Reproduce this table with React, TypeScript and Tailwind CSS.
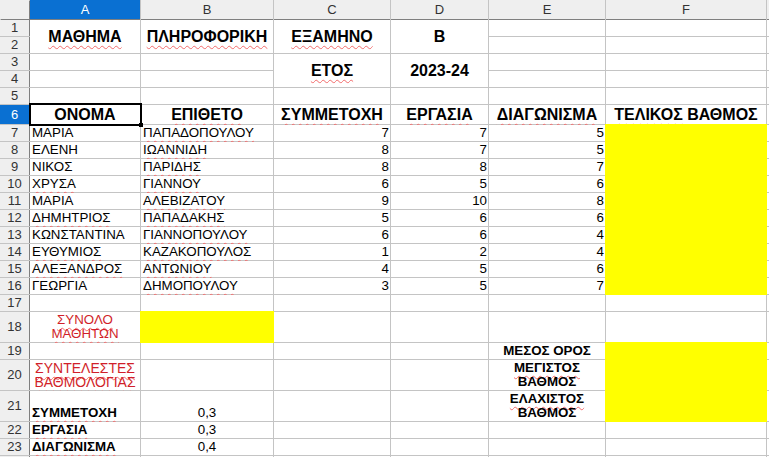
import React from "react";

const sq = "underline decoration-wavy decoration-[#f26b6b] decoration-1 underline-offset-[3px]";

const students: [string, boolean, string, number, number, number][] = [
  ["ΜΑΡΙΑ", false, "ΠΑΠΑΔΟΠΟΥΛΟΥ", 7, 7, 5],
  ["ΕΛΕΝΗ", false, "ΙΩΑΝΝΙΔΗ", 8, 7, 5],
  ["ΝΙΚΟΣ", false, "ΠΑΡΙΔΗΣ", 8, 8, 7],
  ["ΧΡΥΣΑ", true, "ΓΙΑΝΝΟΥ", 6, 5, 6],
  ["ΜΑΡΙΑ", false, "ΑΛΕΒΙΖΑΤΟΥ", 9, 10, 8],
  ["ΔΗΜΗΤΡΙΟΣ", true, "ΠΑΠΑΔΑΚΗΣ", 5, 6, 6],
  ["ΚΩΝΣΤΑΝΤΙΝΑ", false, "ΓΙΑΝΝΟΠΟΥΛΟΥ", 6, 6, 4],
  ["ΕΥΘΥΜΙΟΣ", true, "ΚΑΖΑΚΟΠΟΥΛΟΣ", 1, 2, 4],
  ["ΑΛΕΞΑΝΔΡΟΣ", true, "ΑΝΤΩΝΙΟΥ", 4, 5, 6],
  ["ΓΕΩΡΓΙΑ", false, "ΔΗΜΟΠΟΥΛΟΥ", 3, 5, 7],
];

function RowHead({ n, active }: { n?: number; active?: boolean }) {
  return (
    <div
      className={
        active
          ? "flex items-center justify-center bg-[#0a70d2] text-white text-[13px] shadow-[1px_0_0_#7f7f7f]"
          : "flex items-center justify-center bg-[#efefef] text-[#333] text-[13px] shadow-[1px_0_0_#7f7f7f]"
      }
    >
      {n}
    </div>
  );
}

function ColHead({ label, active }: { label: string; active?: boolean }) {
  return (
    <div
      className={
        active
          ? "flex items-center justify-center bg-[#0a70d2] text-white text-[13px] shadow-[0_1px_0_#7f7f7f]"
          : "flex items-center justify-center bg-[#efefef] text-[#333] text-[13px] shadow-[0_1px_0_#7f7f7f]"
      }
    >
      {label}
    </div>
  );
}

function Empty() {
  return <div className="bg-white" />;
}

function Blanks({ n }: { n: number }) {
  return (
    <>
      {Array.from({ length: n }).map((_, i) => (
        <Empty key={i} />
      ))}
    </>
  );
}

export default function App() {
  return (
    <div className="w-[769px] h-[457px] overflow-hidden bg-white font-['Liberation_Sans',Arial,sans-serif] text-black">
      <div className="grid grid-cols-[29px_110px_132px_116px_97px_116px_160px_1fr] grid-rows-[19px_repeat(5,16px)_19px_repeat(11,16px)_30px_16px_30px_30px_16px_16px_16px] gap-px bg-[#c4c4c4]">
        {/* column headers */}
        <div className="bg-[#efefef] shadow-[1px_1px_0_#7f7f7f]" />
        <ColHead label="A" active />
        <ColHead label="B" />
        <ColHead label="C" />
        <ColHead label="D" />
        <ColHead label="E" />
        <ColHead label="F" />
        <div className="bg-[#efefef] shadow-[0_1px_0_#7f7f7f]" />

        {/* rows 1-2 */}
        <RowHead n={1} />
        <div className="row-span-2 flex items-center justify-center bg-white text-[16px] font-bold">
          <span className={sq}>ΜΑΘΗΜΑ</span>
        </div>
        <div className="row-span-2 flex items-center justify-center bg-white text-[16px] font-bold">
          <span className={sq}>ΠΛΗΡΟΦΟΡΙΚΗ</span>
        </div>
        <div className="row-span-2 flex items-center justify-center bg-white text-[16px] font-bold">
          <span className={sq}>ΕΞΑΜΗΝΟ</span>
        </div>
        <div className="row-span-2 flex items-center justify-center bg-white text-[16px] font-bold">Β</div>
        <Blanks n={3} />
        <RowHead n={2} />
        <Blanks n={3} />

        {/* rows 3-4 */}
        <RowHead n={3} />
        <Blanks n={2} />
        <div className="row-span-2 flex items-center justify-center bg-white text-[16px] font-bold">
          <span className={sq}>ΕΤΟΣ</span>
        </div>
        <div className="row-span-2 flex items-center justify-center bg-white text-[16px] font-bold">2023-24</div>
        <Blanks n={3} />
        <RowHead n={4} />
        <Blanks n={5} />

        {/* row 5 */}
        <RowHead n={5} />
        <Blanks n={7} />

        {/* row 6 */}
        <RowHead n={6} active />
        <div className="relative flex items-center justify-center bg-white text-[16px] font-bold">
          ΟΝΟΜΑ
          <div className="absolute -left-px -top-[2px] -right-[2px] -bottom-[2px] border-2 border-black" />
          <div className="absolute -right-[3px] -bottom-[3px] w-[4px] h-[4px] bg-black" />
        </div>
        <div className="flex items-center justify-center bg-white text-[16px] font-bold">
          <span className={sq}>ΕΠΙΘΕΤΟ</span>
        </div>
        <div className="flex items-center justify-center bg-white text-[16px] font-bold">
          <span className={sq}>ΣΥΜΜΕΤΟΧΗ</span>
        </div>
        <div className="flex items-center justify-center bg-white text-[16px] font-bold">
          <span className={sq}>ΕΡΓΑΣΙΑ</span>
        </div>
        <div className="flex items-center justify-center bg-white text-[16px] font-bold">
          <span className={sq}>ΔΙΑΓΩΝΙΣΜΑ</span>
        </div>
        <div className="flex items-center justify-center bg-white text-[16px] font-bold whitespace-nowrap">
          <span className={sq}>ΤΕΛΙΚΟΣ</span>&nbsp;ΒΑΘΜΟΣ
        </div>
        <Empty />

        {/* rows 7-16 */}
        {students.map(([name, nameSq, surname, a, b, c], i) => (
          <React.Fragment key={i}>
            <RowHead n={7 + i} />
            <div className="flex items-center bg-white px-[2px] text-[13.33px] leading-none">
              <span className={nameSq ? sq : ""}>{name}</span>
            </div>
            <div className="flex items-center bg-white px-[2px] text-[13.33px] leading-none">
              <span className={sq}>{surname}</span>
            </div>
            <div className="flex items-center justify-end bg-white px-[1px] text-[13.33px] leading-none">{a}</div>
            <div className="flex items-center justify-end bg-white px-[1px] text-[13.33px] leading-none">{b}</div>
            <div className="flex items-center justify-end bg-white px-[1px] text-[13.33px] leading-none">{c}</div>
            {i === 0 && <div className="row-span-10 -m-px bg-[#ffff00]" />}
            <Empty />
          </React.Fragment>
        ))}

        {/* row 17 */}
        <RowHead n={17} />
        <Blanks n={7} />

        {/* row 18 */}
        <RowHead n={18} />
        <div className="flex flex-col items-center justify-center bg-white text-[13.33px] leading-[14px] text-[#d11f2a]">
          <span className={sq}>ΣΥΝΟΛΟ</span>
          <span className={sq}>ΜΑΘΗΤΩΝ</span>
        </div>
        <div className="-m-px bg-[#ffff00]" />
        <Blanks n={5} />

        {/* row 19 */}
        <RowHead n={19} />
        <Blanks n={4} />
        <div className="flex items-center justify-center bg-white text-[13.33px] font-bold leading-none">ΜΕΣΟΣ ΟΡΟΣ</div>
        <div className="row-span-3 -m-px bg-[#ffff00]" />
        <Empty />

        {/* row 20 */}
        <RowHead n={20} />
        <div className="flex flex-col items-center justify-center bg-white text-[14px] leading-[14px] text-[#d11f2a]">
          <span className={sq}>ΣΥΝΤΕΛΕΣΤΕΣ</span>
          <span className={sq}>ΒΑΘΜΟΛΟΓΙΑΣ</span>
        </div>
        <Blanks n={3} />
        <div className="flex flex-col items-center justify-center bg-white text-[13.33px] font-bold leading-[14px]">
          <span className={sq}>ΜΕΓΙΣΤΟΣ</span>
          <span>ΒΑΘΜΟΣ</span>
        </div>
        <Empty />

        {/* row 21 */}
        <RowHead n={21} />
        <div className="flex items-end bg-white px-[2px] pb-[2px] text-[13.33px] font-bold leading-none">
          <span className={sq}>ΣΥΜΜΕΤΟΧΗ</span>
        </div>
        <div className="flex items-end justify-center bg-white pb-[2px] text-[13.33px] leading-none">0,3</div>
        <Blanks n={2} />
        <div className="flex flex-col items-center justify-center bg-white text-[13.33px] font-bold leading-[14px]">
          <span className={sq}>ΕΛΑΧΙΣΤΟΣ</span>
          <span>ΒΑΘΜΟΣ</span>
        </div>
        <Empty />

        {/* rows 22-23 */}
        {[
          ["ΕΡΓΑΣΙΑ", "0,3"],
          ["ΔΙΑΓΩΝΙΣΜΑ", "0,4"],
        ].map(([label, value], i) => (
          <React.Fragment key={label}>
            <RowHead n={22 + i} />
            <div className="flex items-center bg-white px-[2px] text-[13.33px] font-bold leading-none">
              <span className={sq}>{label}</span>
            </div>
            <div className="flex items-center justify-center bg-white text-[13.33px] leading-none">{value}</div>
            <Blanks n={5} />
          </React.Fragment>
        ))}

        {/* row 24, only its top edge is in view */}
        <RowHead />
        <Blanks n={7} />
      </div>
    </div>
  );
}
